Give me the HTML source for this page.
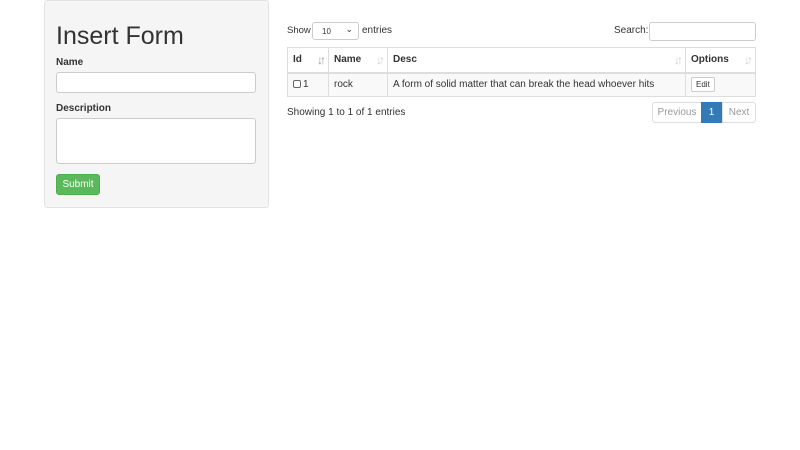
<!DOCTYPE html>
<html><head><style>
*{box-sizing:border-box;margin:0;padding:0}
body{width:800px;height:450px;background:#fff;font-family:"Liberation Sans",sans-serif;font-size:10px;color:#333;position:relative;overflow:hidden}
.abs{position:absolute}
.panel{left:44px;top:0;width:225px;height:208px;background:#f5f5f5;border:1px solid #e3e3e3;border-radius:3px}
h1{position:absolute;left:56px;top:22px;font-size:25px;font-weight:normal;color:#333}
label{position:absolute;font-weight:bold;font-size:10px}
.inp{position:absolute;background:#fff;border:1px solid #ccc;border-radius:3px}
.btn{position:absolute;left:56px;top:174px;width:44px;height:21px;background:#5cb85c;border:1px solid #4cae4c;border-radius:3px;color:#fff;font-size:10px;text-align:center;line-height:19px}
table{position:absolute;left:287px;top:47px;width:469px;border-collapse:collapse}
td,th{border:1px solid #ddd;text-align:left;padding:0 5px;font-size:10px}
th{height:25px;border-bottom:2px solid #ddd;position:relative}
td{height:24px;background:#f9f9f9}
.s{position:absolute;right:5px;top:5px;color:#ccc;font-size:12px;letter-spacing:-3px;font-weight:normal}
.pg{position:absolute;top:102px;height:21px;border:1px solid #ddd;line-height:19px;text-align:center;color:#999}
</style></head><body>
<div class="abs panel"></div>
<h1>Insert Form</h1>
<label style="left:56px;top:57px">Name</label>
<div class="inp" style="left:56px;top:72px;width:200px;height:21px"></div>
<label style="left:56px;top:103px">Description</label>
<div class="inp" style="left:56px;top:118px;width:200px;height:46px"></div>
<div class="btn">Submit</div>

<div class="abs" style="left:287px;top:25px;font-size:9.5px">Show</div>
<div class="inp" style="left:312px;top:22px;width:47px;height:18px;font-size:8px;padding:4px 0 0 9px">10<span style="position:absolute;right:5px;top:1px;font-size:9px">&#8964;</span></div>
<div class="abs" style="left:362px;top:25px">entries</div>
<div class="abs" style="left:614px;top:25px">Search:</div>
<div class="inp" style="left:649px;top:22px;width:107px;height:19px"></div>

<table>
<tr><th style="width:41px">Id<span class="s" style="color:#999">↓↑</span></th><th style="width:59px">Name<span class="s">↓↑</span></th><th style="width:298px">Desc<span class="s">↓↑</span></th><th>Options<span class="s">↓↑</span></th></tr>
<tr><td><span style="display:inline-block;width:8px;height:8px;border:1px solid #666;border-radius:2px;vertical-align:-1px;margin-right:2px;background:#fff"></span>1</td><td>rock</td><td>A form of solid matter that can break the head whoever hits</td><td><span style="display:inline-block;border:1px solid #ccc;border-radius:2px;padding:2px 4px;font-size:8px;background:#fff">Edit</span></td></tr>
</table>
<div class="abs" style="left:287px;top:107px">Showing 1 to 1 of 1 entries</div>
<div class="pg" style="left:652px;width:50px;border-radius:3px 0 0 3px">Previous</div>
<div class="pg" style="left:701px;width:21px;background:#337ab7;border-color:#337ab7;color:#fff">1</div>
<div class="pg" style="left:722px;width:34px;border-radius:0 3px 3px 0">Next</div>
</body></html>
